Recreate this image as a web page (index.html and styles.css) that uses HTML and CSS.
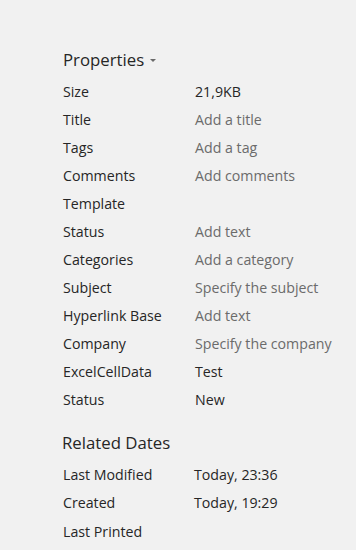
FILE: index.html
```html
<!DOCTYPE html>
<html lang="en">
<head>
  <meta charset="UTF-8">
  <title>Properties</title>
  <link rel="stylesheet" href="styles.css">
</head>
<body>
  <div class="panel">
    <h2 class="section-title">Properties <span class="caret"></span></h2>

    <div class="props">
      <div class="prop"><span class="label">Size</span><span class="value">21,9KB</span></div>
      <div class="prop"><span class="label">Title</span><span class="value hint">Add a title</span></div>
      <div class="prop"><span class="label">Tags</span><span class="value hint">Add a tag</span></div>
      <div class="prop"><span class="label">Comments</span><span class="value hint">Add comments</span></div>
      <div class="prop"><span class="label">Template</span><span class="value"></span></div>
      <div class="prop"><span class="label">Status</span><span class="value hint">Add text</span></div>
      <div class="prop"><span class="label">Categories</span><span class="value hint">Add a category</span></div>
      <div class="prop"><span class="label">Subject</span><span class="value hint">Specify the subject</span></div>
      <div class="prop"><span class="label">Hyperlink Base</span><span class="value hint">Add text</span></div>
      <div class="prop"><span class="label">Company</span><span class="value hint">Specify the company</span></div>
      <div class="prop"><span class="label">ExcelCellData</span><span class="value">Test</span></div>
      <div class="prop"><span class="label">Status</span><span class="value">New</span></div>
    </div>

    <h2 class="section-title dates-title">Related Dates</h2>

    <div class="props dates">
      <div class="prop"><span class="label">Last Modified</span><span class="value">Today, 23:36</span></div>
      <div class="prop"><span class="label">Created</span><span class="value">Today, 19:29</span></div>
      <div class="prop"><span class="label">Last Printed</span><span class="value"></span></div>
    </div>
  </div>
</body>
</html>
```

FILE: styles.css
```css
* {
  margin: 0;
  padding: 0;
  box-sizing: border-box;
}

body {
  background: #f1f1f1;
  font-family: 'Open Sans', sans-serif;
  color: #262626;
  width: 356px;
  height: 550px;
  overflow: hidden;
}

.panel {
  padding: 48px 0 0 63px;
}

.section-title {
  font-size: 16.8px;
  font-weight: 400;
  line-height: 24px;
  color: #262626;
  display: flex;
  align-items: center;
  gap: 6px;
  margin-bottom: 5px;
}

/* petit triangle a cote du titre */
.caret {
  width: 0;
  height: 0;
  border-left: 3px solid transparent;
  border-right: 3px solid transparent;
  border-top: 3px solid #6a6a6a;
  margin-top: 1px;
}

.props {
  display: flex;
  flex-direction: column;
}

.prop {
  display: grid;
  grid-template-columns: 132px 1fr;
  height: 28px;
  align-items: center;
  font-size: 14.2px;
}

.value {
  color: #262626;
}

.value.hint {
  color: #6b6b6b;
}

.dates-title {
  margin-top: 18px;
  margin-left: -1px;
  margin-bottom: 5px;
}

.dates .prop {
  height: 28.5px;
  grid-template-columns: 131px 1fr;
}
```
